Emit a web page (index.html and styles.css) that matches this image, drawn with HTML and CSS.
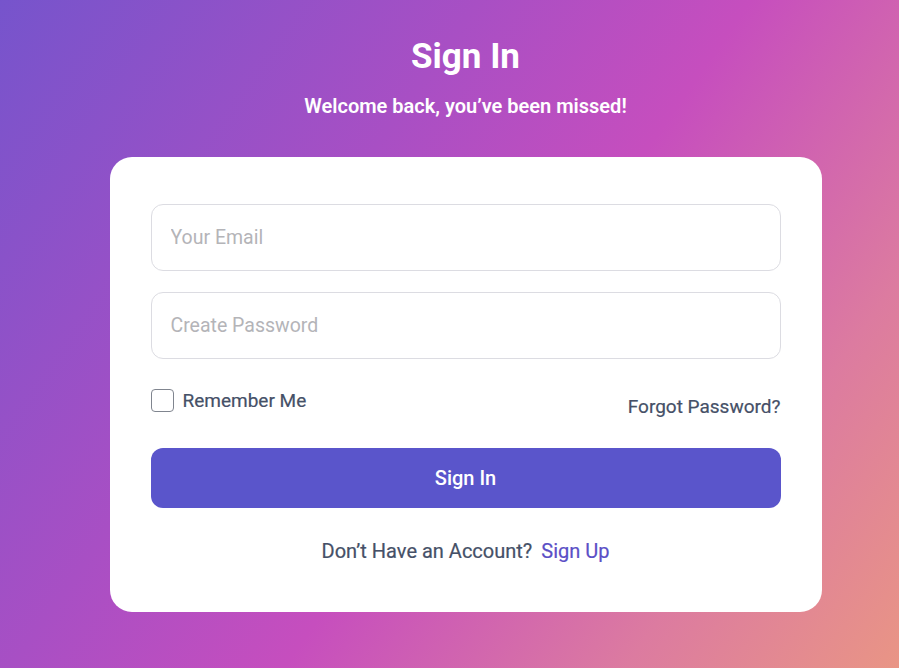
FILE: index.html
```html
<!DOCTYPE html>
<html>
<head>
<title>Sign In</title>
<link rel="stylesheet" href="styles.css">
</head>
<body>
<div class="page">
  <h1 class="title">Sign In</h1>
  <p class="subtitle">Welcome back, you’ve been missed!</p>
  <form class="card">
    <input class="field" type="email" placeholder="Your Email">
    <input class="field" type="password" placeholder="Create Password">
    <div class="options">
      <label class="remember"><span class="box"></span>Remember Me</label>
      <a class="forgot" href="#">Forgot Password?</a>
    </div>
    <button class="submit" type="button">Sign In</button>
    <p class="signup">Don’t Have an Account? <a href="#">Sign Up</a></p>
  </form>
</div>
</body>
</html>
```

FILE: styles.css
```css
html, body { margin: 0; height: 100%; }
body {
  font-family: Roboto, "Liberation Sans", sans-serif;
  background: linear-gradient(125deg, #7654cc 0%, #a84fc4 35%, #c64ebe 55%, #dc7ba0 80%, #e99585 100%);
  overflow: hidden;
}

.page { display: flex; flex-direction: column; align-items: center; padding: 35px 0 0 32px; }

.title { margin: 0; color: #fff; font-size: 35px; font-weight: 700; line-height: 44px; }
.subtitle { margin: 14px 0 0; color: #fff; font-size: 20px; font-weight: 600; line-height: 26px; }

.card {
  box-sizing: border-box;
  width: 712px;
  margin-top: 38px;
  padding: 47px 41px 49px;
  background: #fff;
  border-radius: 22px;
  display: flex;
  flex-direction: column;
}

.field {
  box-sizing: border-box;
  height: 67px;
  margin-bottom: 21px;
  padding: 0 19px;
  border: 1px solid #dcdce2;
  border-radius: 12px;
  font-family: inherit;
  font-size: 19.5px;
  color: #333;
  outline: none;
}
.field::placeholder { color: #b4b4b8; }

.options { display: flex; justify-content: space-between; align-items: flex-end; margin-top: 9px; }
.remember { display: flex; align-items: center; gap: 9px; color: #455067; font-size: 19px; -webkit-text-stroke: 0.2px #455067; }
.box { box-sizing: border-box; width: 23px; height: 23px; border: 1.5px solid #80858f; border-radius: 4px; }
.forgot { color: #455067; font-size: 19px; text-decoration: none; position: relative; top: 6px; -webkit-text-stroke: 0.2px #455067; }

.submit {
  margin-top: 36px;
  height: 60px;
  border: 0;
  border-radius: 12px;
  background: #5a55cb;
  color: #fff;
  font-family: inherit;
  font-size: 20px;
  font-weight: 500;
}

.signup { margin: 31px 0 0; text-align: center; color: #455067; font-size: 20px; -webkit-text-stroke: 0.2px #455067; }
.signup a { margin-left: 4px; color: #5b4fc6; text-decoration: none; -webkit-text-stroke: 0.2px #5b4fc6; }
```
